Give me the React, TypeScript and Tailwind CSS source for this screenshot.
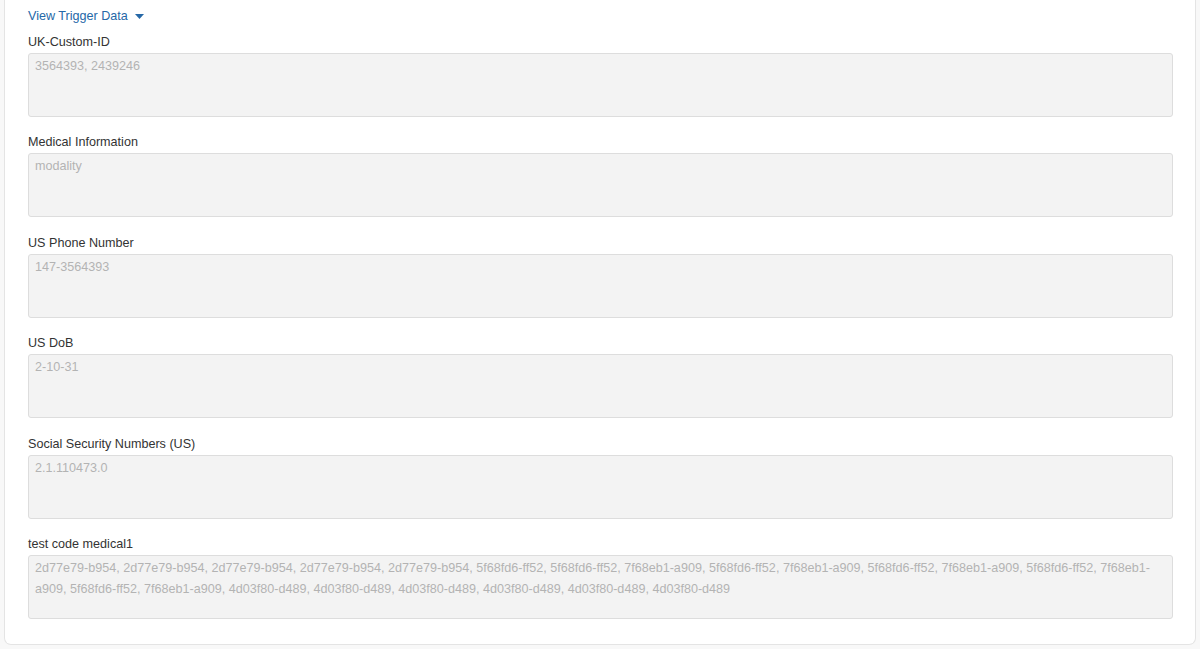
import React from "react";

const fields: { label: string; value: string }[] = [
  { label: "UK-Custom-ID", value: "3564393, 2439246" },
  { label: "Medical Information", value: "modality" },
  { label: "US Phone Number", value: "147-3564393" },
  { label: "US DoB", value: "2-10-31" },
  { label: "Social Security Numbers (US)", value: "2.1.110473.0" },
  {
    label: "test code medical1",
    value:
      "2d77e79-b954, 2d77e79-b954, 2d77e79-b954, 2d77e79-b954, 2d77e79-b954, 5f68fd6-ff52, 5f68fd6-ff52, 7f68eb1-a909, 5f68fd6-ff52, 7f68eb1-a909, 5f68fd6-ff52, 7f68eb1-a909, 5f68fd6-ff52, 7f68eb1-a909, 5f68fd6-ff52, 7f68eb1-a909, 4d03f80-d489, 4d03f80-d489, 4d03f80-d489, 4d03f80-d489, 4d03f80-d489, 4d03f80-d489",
  },
];

export default function App() {
  return (
    <div
      className="h-[649px] w-[1200px] overflow-hidden bg-[#f8f8f8] pl-[4px] pr-[4px]"
      style={{ fontFamily: '"Liberation Sans", Arial, sans-serif' }}
    >
      <div className="rounded-b-[7px] border-x border-b border-[#e4e4e4] bg-white pl-[23px] pr-[22px] pt-[7px] pb-[25px]">
        <div className="mb-[8px] flex h-[18px] items-center gap-[7px] text-[12.6px] leading-[18px] text-[#2668a7]">
          <span>View Trigger Data</span>
          <svg width="9" height="5" viewBox="0 0 9 5" className="mt-[1px]">
            <path d="M0 0 H9 L4.5 5 Z" fill="#2668a7" />
          </svg>
        </div>
        {fields.map((f, i) => (
          <div key={i} className={i < fields.length - 1 ? "mb-[16.4px]" : ""}>
            <div className="mb-[2px] text-[12.6px] leading-[18px] text-[#333333]">{f.label}</div>
            <div className="h-[64px] rounded-[3px] border border-[#dddddd] bg-[#f3f3f3] px-[6px] pt-[2px] text-[12.6px] leading-[21px] text-[#b3b3b3] break-words">
              {f.value}
            </div>
          </div>
        ))}
      </div>
    </div>
  );
}
